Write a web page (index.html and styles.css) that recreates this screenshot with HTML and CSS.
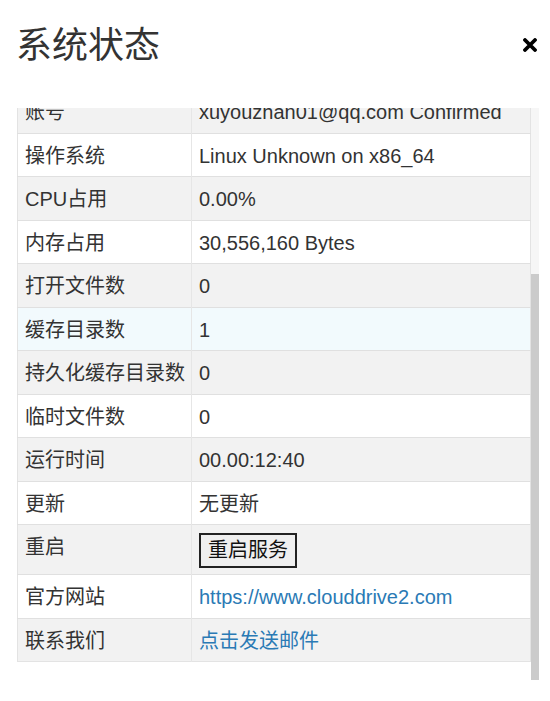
FILE: index.html
```html
<!DOCTYPE html>
<html lang="zh-CN">
<head>
<meta charset="utf-8">
<title>系统状态</title>
<link rel="stylesheet" href="styles.css">
</head>
<body>
<div class="modal">
  <div class="modal-header">
    <h1 class="modal-title">系统状态</h1>
    <button class="close" aria-label="关闭">
      <svg width="14" height="14" viewBox="0 0 14 14"><path d="M2 2 L12 12 M12 2 L2 12" stroke="#000" stroke-width="3.8" stroke-linecap="round"/></svg>
    </button>
  </div>
  <div class="modal-body">
    <div class="viewport">
      <div class="scroll-inner">
        <table class="status-table">
          <colgroup><col class="col-label"><col></colgroup>
          <tbody>
            <tr><td>账号</td><td>xuyouzhan01@qq.com Confirmed</td></tr>
            <tr><td>操作系统</td><td>Linux Unknown on x86_64</td></tr>
            <tr><td>CPU占用</td><td>0.00%</td></tr>
            <tr><td>内存占用</td><td>30,556,160 Bytes</td></tr>
            <tr><td>打开文件数</td><td>0</td></tr>
            <tr class="hover"><td>缓存目录数</td><td>1</td></tr>
            <tr><td>持久化缓存目录数</td><td>0</td></tr>
            <tr><td>临时文件数</td><td>0</td></tr>
            <tr><td>运行时间</td><td>00.00:12:40</td></tr>
            <tr><td>更新</td><td>无更新</td></tr>
            <tr><td>重启</td><td><button class="btn">重启服务</button></td></tr>
            <tr><td>官方网站</td><td><a href="#">https://www.clouddrive2.com</a></td></tr>
            <tr><td>联系我们</td><td><a href="#">点击发送邮件</a></td></tr>
          </tbody>
        </table>
      </div>
    </div>
    <div class="scrollbar"><div class="thumb"></div></div>
  </div>
</div>
</body>
</html>
```
FILE: styles.css
```css
html, body {
  margin: 0;
  padding: 0;
  background: #fff;
}
body {
  font-family: "Liberation Sans", Arial, "Noto Sans CJK SC", sans-serif;
  color: #333;
}
.modal {
  width: 550px;
}
.modal-header {
  display: flex;
  justify-content: space-between;
  align-items: center;
  padding: 25px 13px 0 16px;
  height: 42px;
}
.modal-title {
  margin: 0;
  font-size: 36px;
  line-height: 42px;
  font-weight: normal;
  color: #333;
}
.close {
  border: 0;
  background: none;
  padding: 0;
  width: 14px;
  height: 15px;
  margin-top: -2px;
  display: flex;
  align-items: center;
  justify-content: center;
}
.modal-body {
  margin: 41px 0 0 17px;
  width: 522px;
  height: 572px;
  display: flex;
}
.viewport {
  width: 514px;
  height: 572px;
  overflow: hidden;
  display: flex;
  flex-direction: column;
  justify-content: flex-end;
}
.scroll-inner {
  padding-bottom: 18px;
  flex-shrink: 0;
}
.scrollbar {
  width: 8px;
  height: 572px;
  background: #f6f6f6;
  display: flex;
  flex-direction: column;
  justify-content: flex-end;
}
.thumb {
  height: 406px;
  background: #cbcbcb;
}
.status-table {
  width: 514px;
  border-collapse: collapse;
  table-layout: fixed;
  font-size: 20px;
  border: 1px solid #e3e3e3;
}
.col-label {
  width: 174px;
}
.status-table td {
  padding: 9px 8px 7px 7px;
  line-height: 26.5px;
  vertical-align: top;
  border-top: 1px solid #e0e0e0;
  white-space: nowrap;
}
.status-table td + td {
  border-left: 1px solid #e6e6e6;
}
.status-table tr:nth-child(odd) {
  background: #f2f2f2;
}
.status-table tr.hover {
  background: #f2fafd;
}
.status-table a {
  color: #2a7ab5;
  text-decoration: none;
}
.btn {
  font-family: "Liberation Sans", Arial, "Noto Sans CJK SC", sans-serif;
  font-size: 20px;
  height: 35px;
  padding: 0 7px;
  border: 2px solid #222;
  border-radius: 0;
  background: #efefef;
  color: #111;
  line-height: 29px;
  margin: -1px 0 -1px;
  display: block;
}
```
